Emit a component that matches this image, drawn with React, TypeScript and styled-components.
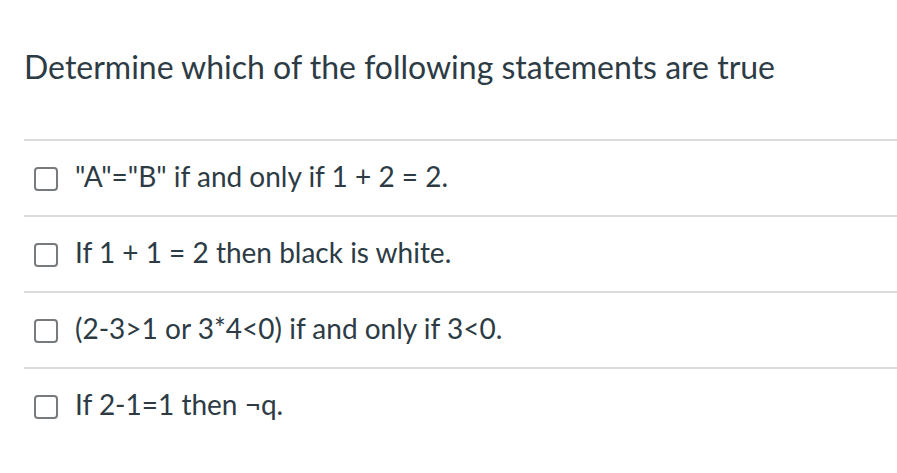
import React from "react";
import styled, { createGlobalStyle } from "styled-components";

const GlobalStyle = createGlobalStyle`
  body {
    margin: 0;
    background: #ffffff;
    font-family: Lato, "Liberation Sans", sans-serif;
    color: #2d3b45;
  }
`;

const Page = styled.div`
  width: 897px;
  height: 473px;
  padding-left: 24px;
  box-sizing: border-box;
  background: #ffffff;
`;

const Question = styled.h2`
  margin: 0;
  padding-top: 47px;
  height: 139px;
  box-sizing: border-box;
  font-size: 32px;
  font-weight: 400;
  line-height: 40px;
  color: #2d3b45;
`;

const Answers = styled.ul`
  list-style: none;
  margin: 0;
  padding: 0;
  border-top: 2px solid #dcdcdc;
`;

const Answer = styled.li`
  display: flex;
  align-items: center;
  gap: 17px;
  height: 74px;
  padding-left: 10px;
  border-bottom: 2px solid #dcdcdc;

  &:last-child {
    border-bottom: none;
  }
`;

const Box = styled.span`
  width: 24px;
  height: 24px;
  flex: none;
  border: 2px solid #777b7e;
  border-radius: 4px;
  box-sizing: border-box;
  margin-top: 2px;
`;

const Label = styled.span`
  font-size: 28px;
  line-height: 34px;
  padding-bottom: 4px;
  color: #2d3b45;
`;

const answers = [
  '"A"="B" if and only if 1 + 2 = 2.',
  "If 1 + 1 = 2 then black is white.",
  "(2-3>1 or 3*4<0) if and only if 3<0.",
  "If 2-1=1 then \u00ACq.",
];

export default function App() {
  return (
    <>
      <GlobalStyle />
      <Page>
        <Question>Determine which of the following statements are true</Question>
        <Answers>
          {answers.map((text, i) => (
            <Answer key={i}>
              <Box />
              <Label>{text}</Label>
            </Answer>
          ))}
        </Answers>
      </Page>
    </>
  );
}
